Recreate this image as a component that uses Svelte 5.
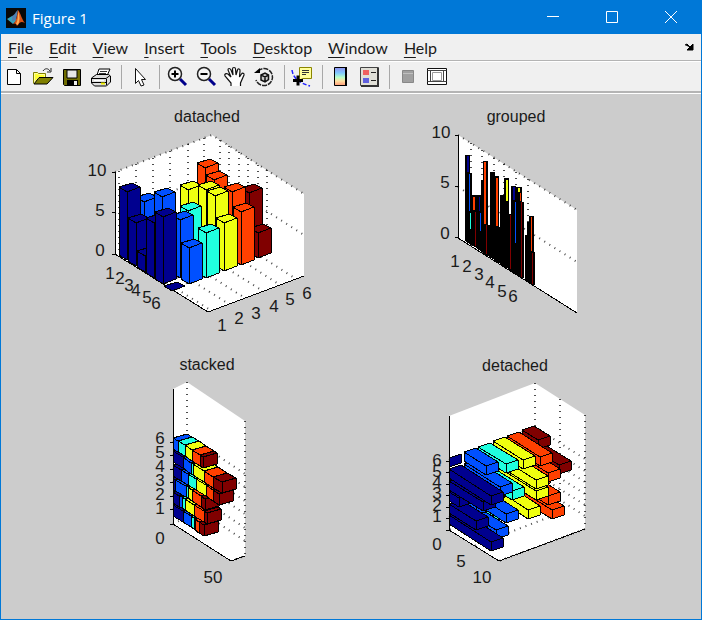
<script lang="ts">
	type Point = [number, number];
	type Face = { points: string; fill: string };
	type Label = [string, number, number];
	type Chart = {
		title: string;
		titleAt: Point;
		viewBox: string;
		// left, back, right and front corners of the floor
		corners: [Point, Point, Point, Point];
		height: number;
		u: number[];
		v: number[];
		z: number[];
		labels: Label[];
		ticks: Point[];
		faces: Face[];
	};

	const menus = ['File', 'Edit', 'View', 'Insert', 'Tools', 'Desktop', 'Window', 'Help'];

	const tools = [
		['new', 'open', 'save', 'print'],
		['pointer'],
		['zoom-in', 'zoom-out', 'pan', 'rotate'],
		['data-cursor'],
		['colorbar', 'legend'],
		['hide-tools', 'show-tools']
	];

	const jet = ['#00008f', '#0050ff', '#20ffdf', '#efff10', '#ff4000', '#800000'];

	// rows are Y = 1..6, columns are the six series
	const data = [
		[68, 52, 22, 8, 30, 34],
		[43, 20, 20, 57, 72, 20],
		[16, 69, 14, 27, 66, 27],
		[55, 45, 54, 69, 50, 38],
		[67, 58, 14, 69, 66, 59],
		[0, 36, 45, 48, 53, 25]
	];

	const rows = [0, 1, 2, 3, 4, 5];
	const columns = [5, 4, 3, 2, 1, 0];

	function join(...points: Point[]) {
		return points.map(([x, y]) => `${Math.round(x)},${Math.round(y)}`).join(' ');
	}

	function uprightBar(x: number, y: number, h: number, fill: string): Face[] {
		const top = y - h;
		return [
			{ fill, points: join([x - 8, y - 5], [x, y], [x, top], [x - 8, top - 5]) },
			{ fill, points: join([x, y], [x + 13, y - 5], [x + 13, top - 5], [x, top]) },
			{ fill, points: join([x, top], [x + 13, top - 5], [x + 5, top - 9], [x - 8, top - 5]) }
		];
	}

	function flatBar(x: number, y: number, length: number, w: number, h: number, fill: string): Face[] {
		const endX = x + length;
		const endY = y + length * 0.64;
		return [
			{ fill, points: join([x, y], [endX, endY], [endX, endY - h], [x, y - h]) },
			{ fill, points: join([x, y - h], [endX, endY - h], [endX + w, endY - h - 4], [x + w, y - h - 4]) },
			{ fill, points: join([endX, endY], [endX + w, endY - 4], [endX + w, endY - h - 4], [endX, endY - h]) }
		];
	}

	const detached = columns.flatMap((j) =>
		rows.flatMap((i) => uprightBar(127 + 9 * i + 17.2 * j, 260 + 6.1 * i - 6.5 * j, data[i][j], jet[j]))
	);

	const stacked = rows.flatMap((i) => {
		let x = 173;
		let y = 516 - 13.5 * i;
		return data[i].flatMap((value, j) => {
			const length = value / 6.8;
			const bar = length < 1 ? [] : flatBar(x, y, length, 14, 11, jet[j]);
			x += length;
			y += length * 0.64;
			return bar;
		});
	});

	const detachedFlat = columns.flatMap((j) =>
		rows.flatMap((i) =>
			flatBar(449 + 14.6 * j, 524 - 11.5 * i - 5.5 * j, data[i][j] * 0.62, 12, 9, jet[j])
		)
	);

	// the groups are so thin that their outlines merge: x, right, top
	const outlines = [
		[465, 469, 155], [468, 471, 173], [469, 472, 212], [472, 476, 195], [476, 481, 195],
		[481, 483, 180], [483, 487, 161], [487, 489, 225], [489, 491, 235], [490, 494, 172],
		[494, 498, 176], [498, 500, 227], [500, 504, 195], [504, 508, 178], [508, 511, 214],
		[511, 515, 186], [515, 521, 187], [521, 523, 202], [525, 527, 235], [527, 529, 222],
		[529, 533, 216], [533, 534, 252]
	];

	// series, x, width, top, bottom
	const slivers = [
		[0, 467, 2, 156, 172], [1, 469, 1, 174, 211], [2, 470, 1, 213, 229], [4, 473, 2, 197, 210],
		[5, 475, 1, 212, 246], [0, 479, 1, 197, 211], [1, 480, 1, 213, 231], [4, 484, 2, 162, 224],
		[5, 486, 1, 225, 254], [4, 496, 2, 178, 226], [3, 506, 2, 180, 201], [5, 510, 1, 215, 269],
		[0, 513, 2, 187, 200], [1, 515, 1, 202, 243], [3, 518, 2, 188, 192], [4, 520, 1, 193, 201],
		[5, 521, 1, 202, 277], [4, 531, 1, 217, 251], [5, 532, 1, 253, 284]
	];

	const grouped: Face[] = outlines.map(([x, right, top]) => ({
		fill: '#000000',
		points: join([x, top], [right, top], [right, 239 + (right - 463) * 0.65], [x, 239 + (x - 463) * 0.65])
	}));

	const rowFractions = [0.11, 0.21, 0.31, 0.41, 0.51, 0.61];

	const charts: Chart[] = [
		{
			title: 'datached',
			titleAt: [207, 122],
			viewBox: '1 94 350 250',
			corners: [[115, 254], [212, 217], [304, 276], [208, 312]],
			height: 82,
			u: [0.04, 0.22, 0.39, 0.57, 0.75, 0.92],
			v: [0.09, 0.19, 0.29, 0.39, 0.5, 0.6],
			z: [0.5, 1],
			labels: [
				['10', 97, 176], ['5', 100, 216], ['0', 100, 256],
				['1', 110, 279], ['2', 120, 284], ['3', 129, 291], ['4', 136, 296], ['5', 147, 303], ['6', 156, 309],
				['1', 222, 331], ['2', 239, 324], ['3', 256, 319], ['4', 274, 312], ['5', 290, 305], ['6', 307, 299]
			],
			ticks: [[112, 172], [112, 212], [112, 254]],
			faces: detached
		},
		{
			title: 'grouped',
			titleAt: [516, 122],
			viewBox: '351 94 350 250',
			corners: [[458, 238], [458, 238], [577, 313], [577, 313]],
			height: 103,
			u: [],
			v: [0.11, 0.2, 0.3, 0.39, 0.49, 0.59],
			z: [0.5, 1],
			labels: [
				['10', 441, 138], ['5', 445, 188], ['0', 445, 239],
				['1', 455, 267], ['2', 467, 272], ['3', 479, 280], ['4', 490, 288], ['5', 502, 297], ['6', 513, 302]
			],
			ticks: [[455, 135], [455, 186], [455, 237]],
			faces: grouped
		},
		{
			title: 'stacked',
			titleAt: [207, 370],
			viewBox: '1 344 350 275',
			corners: [[173, 524], [187, 517], [245, 556], [231, 561]],
			height: 135,
			u: [],
			v: [0, 1],
			z: rowFractions,
			labels: [
				['6', 160, 444], ['5', 160, 458], ['4', 160, 472], ['3', 160, 486], ['2', 160, 500], ['1', 160, 514],
				['0', 160, 544], ['50', 213, 583]
			],
			ticks: [[170, 442], [170, 455], [170, 469], [170, 482], [170, 496], [170, 509], [170, 524]],
			faces: stacked
		},
		{
			title: 'detached',
			titleAt: [515, 371],
			viewBox: '351 344 350 275',
			corners: [[449, 530], [535, 497], [585, 529], [499, 561]],
			height: 114,
			u: [],
			v: [0, 0.5, 1],
			z: rowFractions,
			labels: [
				['6', 437, 466], ['5', 437, 477], ['4', 437, 488], ['3', 437, 499], ['2', 437, 511], ['1', 437, 522],
				['0', 437, 550], ['5', 461, 567], ['10', 482, 583]
			],
			ticks: [[446, 461], [446, 472], [446, 484], [446, 495], [446, 507], [446, 518], [446, 530]],
			faces: detachedFlat
		}
	];

	function lerp(a: Point, b: Point, t: number): Point {
		return [a[0] + (b[0] - a[0]) * t, a[1] + (b[1] - a[1]) * t];
	}

	function raise([x, y]: Point, h: number): Point {
		return [x, y - h];
	}

	function background({ corners: [left, back, right, front], height }: Chart) {
		return join(left, raise(left, height), raise(back, height), raise(right, height), right, front);
	}

	function gridLines({ corners: [left, back, right, front], height, u, v, z }: Chart) {
		return [
			...u.map((t) => {
				const p = lerp(left, back, t);
				return join(raise(p, height), p, lerp(front, right, t));
			}),
			...v.map((t) => {
				const p = lerp(back, right, t);
				return join(raise(p, height), p, lerp(left, front, t));
			}),
			...z.map((t) => join(raise(left, height * t), raise(back, height * t), raise(right, height * t)))
		];
	}
</script>

{#snippet icon(name: string)}
	<svg class="icon" viewBox="0 0 24 24" aria-hidden="true">
		{#if name === 'new'}
			<path d="M5.5 4.5h9l4 4v11h-13z" fill="#fff" stroke="#000" />
			<path d="M14.5 4.5v4h4" fill="none" stroke="#000" />
		{:else if name === 'open'}
			<path d="M2.5 18.5v-11h4l1 1h7v5" fill="#ffff9c" stroke="#808000" />
			<path d="M3 19l5-6.500h14L16 19z" fill="#808000" stroke="#000" />
			<path d="M4 16V9h3l1 1h5v2H8z" fill="#ffff30" />
			<path d="M12 6c2-3 5-3 7 0M20 3v4h-4" fill="none" stroke="#222" />
		{:else if name === 'save'}
			<path d="M3.5 4.5h17v16h-16l-1-1z" fill="#6f6c00" stroke="#000" />
			<path d="M7 5h10v8H7z" fill="#e6e6e6" stroke="#000" />
			<path d="M7 15h11v5H7z" fill="#000" />
			<path d="M14 16h3v4h-3z" fill="#eee" />
		{:else if name === 'print'}
			<path d="M8 10l2-6h11l-3 7" fill="#fff" stroke="#000" />
			<path d="M11 6.5h7M10 8.5h7" stroke="#333" />
			<path d="M2.5 13l5-3.5h12l2 1.500v6l-4 4h-12l-3-3z" fill="#ddd" stroke="#000" />
			<path d="M3 13.5h14l4-3M17.5 14v6M3 17.5h14" fill="none" stroke="#000" />
			<path d="M12 18.500h4" stroke="#ee0" stroke-width="2" />
			<path d="M5 15.5h10" stroke="#fff" />
		{:else if name === 'pointer'}
			<path d="M8.5 3.5v15l3-3 2.5 5.5 3-1-2.5-5.5h4z" fill="#fff" stroke="#111" />
		{:else if name === 'zoom-in' || name === 'zoom-out'}
			<path d="M15 14l6 6" stroke="#00008b" stroke-width="3" />
			<circle cx="10" cy="9" r="6.5" fill="#f6f6f6" stroke="#222" stroke-width="1.5" />
			<path d={name === 'zoom-in' ? 'M6.500 9h7M10 5.500v7' : 'M6.500 9h7'} stroke="#000" stroke-width="2" />
		{:else if name === 'pan'}
			<path
				d="M8 21v-3l-6-7c-1-2 1-3 3-2l3 3-3-7c0-2 2-2 3 0l2 5-.5-6c0-2 3-2 3 0l.5 6 1.500-5c.5-2 3-1 2.500 1l-.5 6 2-3c1-1.500 3-.5 2.500 1l-3.500 8v3"
				fill="#fff"
				stroke="#111"
				stroke-width="1.2"
			/>
		{:else if name === 'rotate'}
			<path d="M6 6a8.500 8.500 0 1 1-2 9" fill="none" stroke="#222" stroke-width="1.5" stroke-dasharray="5 1" />
			<path d="M2 8l6-5v5z" />
			<path d="M9 10l4-2 3.500 2v4.500L13 17l-4-2zM9 10l4 2 3.500-2M13 12v5" fill="#ccc" stroke="#111" stroke-width="1.5" />
		{:else if name === 'data-cursor'}
			<path d="M2 5c1 6 4 12 18 16" fill="none" stroke="#2020ff" stroke-width="1.5" stroke-dasharray="4 2" />
			<path d="M9.5 2.5h12v11h-9l-4 3 1-4z" fill="#ffff9c" stroke="#8b8500" />
			<path d="M12 5.5h7M12 7.5h7M12 9.5h4" stroke="#333" />
			<path d="M3 15.5h10M8 10.5v10" stroke="#000" stroke-width="3" />
		{:else if name === 'colorbar'}
			<defs>
				<linearGradient id="spectrum" x2="0" y2="1">
					<stop stop-color="#9090ef" />
					<stop offset=".3" stop-color="#80c8ff" />
					<stop offset=".55" stop-color="#b8ffc8" />
					<stop offset=".75" stop-color="#ffe0a0" />
					<stop offset="1" stop-color="#ff9878" />
				</linearGradient>
			</defs>
			<path d="M6.5 2.5h12v18h-12z" fill="url(#spectrum)" stroke="#000" />
			<path d="M18 2v19" stroke="#000" stroke-width="2" />
		{:else if name === 'legend'}
			<path d="M3.5 2.5h18v18h-18z" fill="#e0dfd7" stroke="#444" />
			<path d="M21 3v18H4" fill="none" stroke="#333" stroke-width="2" />
			<path d="M6 5h6v5H6z" fill="#ef6060" />
			<path d="M6 13h6v5H6z" fill="#6060df" />
			<path d="M14 7.5h5M14 15.5h5" stroke="#222" />
		{:else if name === 'hide-tools'}
			<path d="M7.5 5.5h11v12h-11z" fill="#a0a0a0" stroke="#888" />
			<path d="M8 8.5h10" stroke="#c0c0c0" />
		{:else}
			<path d="M3.5 3.5h19v16h-19z" fill="#fff" stroke="#111" />
			<path d="M3.5 5.5h19M3.5 16.5h19M6.5 6v10M19.5 6v10" stroke="#444" />
			<path d="M8.5 7.5h9v8h-9z" fill="#fff" stroke="#999" />
		{/if}
	</svg>
{/snippet}

<main class="window">
	<header class="titlebar">
		<svg class="logo" viewBox="0 0 20 20" aria-hidden="true">
			<path d="M0 0h20v20H0z" fill="#080808" />
			<path d="M1 11l5-3 5 4-4 4z" fill="#35a4bd" />
			<path d="M6 8c3-1 4-5 6-6l-2 10-4 1z" fill="#517faf" />
			<path d="M12 2c3 4 4 10 7 13-4-2-5-1-8 3-1-3-2-3-4-2 4-3 4-9 5-14z" fill="#d95218" />
			<path d="M12 3c0 5 0 9-2 13l2 1c2-4 2-9 0-14z" fill="#ffac51" />
		</svg>
		<h1>Figure 1</h1>
		<div class="window-buttons">
			<button aria-label="Minimize"><svg viewBox="0 0 12 12"><path d="M0 5.500h12" /></svg></button>
			<button aria-label="Maximize"><svg viewBox="0 0 12 12"><path d="M.5.5h11v11H.5z" /></svg></button>
			<button aria-label="Close"><svg viewBox="0 0 12 12"><path d="M0 0l12 12M12 0L0 12" /></svg></button>
		</div>
	</header>

	<nav class="menubar">
		{#each menus as menu}
			<button><span class="mnemonic">{menu[0]}</span>{menu.slice(1)}</button>
		{/each}
		<button class="dock" aria-label="Dock figure">
			<svg viewBox="0 0 10 8"><path d="M1 2l2-1 4 4M9 1v6H3z" fill="#000" stroke="#000" /></svg>
		</button>
	</nav>

	<div class="toolbar">
		{#each tools as group}
			<div class="tool-group">
				{#each group as name}
					<button aria-label={name}>{@render icon(name)}</button>
				{/each}
			</div>
		{/each}
	</div>

	<section class="figure">
		{#each charts as chart}
			<svg class="chart" viewBox={chart.viewBox} role="img" aria-label={chart.title}>
				<polygon class="wall" points={background(chart)} />
				{#each gridLines(chart) as points}
					<polyline class="grid" {points} />
				{/each}
				<polyline
					class="axis"
					points={join(
						raise(chart.corners[0], chart.height),
						chart.corners[0],
						chart.corners[3],
						chart.corners[2]
					)}
				/>
				{#each chart.ticks as [x, y]}
					<path class="axis" d="M{x} {y}h4" />
				{/each}
				{#each chart.faces as face}
					<polygon class="face" points={face.points} fill={face.fill} />
				{/each}
				{#if chart.title === 'grouped'}
					{#each slivers as [series, x, width, top, bottom]}
						<rect {x} y={top} {width} height={bottom - top} fill={jet[series]} />
					{/each}
				{/if}
				<text x={chart.titleAt[0]} y={chart.titleAt[1]}>{chart.title}</text>
				{#each chart.labels as [label, x, y]}
					<text class="tick-label" {x} {y}>{label}</text>
				{/each}
			</svg>
		{/each}
	</section>
</main>

<style>
	:global(body) {
		margin: 0;
		background: #cccccc;
	}

	.window {
		box-sizing: border-box;
		min-height: 100vh;
		border: 1px solid #0078d7;
		background: #cccccc;
	}

	button {
		margin: 0;
		padding: 0;
		border: 0;
		background: none;
		color: inherit;
		font: inherit;
	}

	.titlebar {
		display: flex;
		align-items: center;
		height: 33px;
		padding: 0 1px 0 5px;
		background: #0078d7;
		color: #ffffff;
	}

	.logo {
		width: 20px;
		height: 20px;
	}

	h1 {
		margin: 0 0 0 6px;
		font: 400 15px/30px 'Open Sans', sans-serif;
	}

	.window-buttons {
		display: flex;
		margin-left: auto;
	}

	.window-buttons button {
		width: 59px;
		height: 33px;
	}

	.window-buttons svg {
		width: 12px;
		height: 12px;
		fill: none;
		stroke: #ffffff;
	}

	.menubar {
		display: flex;
		align-items: center;
		gap: 16px;
		height: 26px;
		padding: 0 7px;
		background: #f0f0f0;
		border-bottom: 1px solid #b4b4b4;
		color: #1a1a1a;
		font: 400 16px Lato, sans-serif;
	}

	.mnemonic {
		text-decoration: underline;
		text-underline-offset: 3px;
		text-decoration-thickness: 1px;
	}

	.dock {
		display: flex;
		margin-left: auto;
	}

	.dock svg {
		width: 10px;
		height: 8px;
	}

	.toolbar {
		display: flex;
		height: 29px;
		border-top: 1px solid #ffffff;
		border-bottom: 2px solid #b4b4b4;
		background: #f0f0f0;
		box-shadow: 0 1px #ffffff;
	}

	.tool-group {
		display: flex;
		align-items: center;
	}

	.tool-group + .tool-group::before {
		content: '';
		width: 1px;
		height: 24px;
		margin: 0 4px;
		background: #a8a8a8;
	}

	.tool-group button {
		display: flex;
		width: 29px;
		padding-left: 1px;
	}

	.icon {
		width: 24px;
		height: 24px;
	}

	.figure {
		display: grid;
		grid-template-columns: 1fr 1fr;
		padding-top: 1px;
	}

	.chart {
		display: block;
		width: 100%;
	}

	.wall {
		fill: #ffffff;
	}

	.grid,
	.axis {
		fill: none;
		stroke: #000000;
	}

	.grid {
		stroke-width: 2;
		stroke-dasharray: 1 5;
		opacity: 0.7;
	}

	.axis,
	.face {
		shape-rendering: crispEdges;
	}

	.face {
		stroke: #000000;
		stroke-linejoin: round;
	}

	text {
		fill: #1a1a1a;
		font-family: 'Liberation Sans', Arial, sans-serif;
		font-size: 16px;
		text-anchor: middle;
	}

	.tick-label {
		font-size: 17px;
	}
</style>
